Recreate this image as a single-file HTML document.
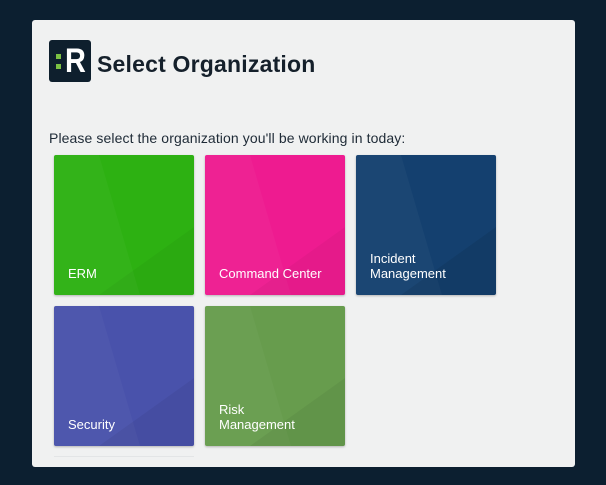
<!DOCTYPE html>
<html><head><style>
body{margin:0;width:606px;height:485px;background:#0c1f30;font-family:"Liberation Sans",sans-serif;overflow:hidden;position:relative}
.panel{position:absolute;left:32px;top:20px;width:543px;height:447px;background:#f0f1f1;border-radius:3px}
.logo{position:absolute;left:49px;top:40px;width:42px;height:42px;background:#0e1f2d;border-radius:3px}
h1{position:absolute;left:97px;top:51px;margin:0;font-size:23px;font-weight:bold;color:#15202b;letter-spacing:0.2px}
.sub{position:absolute;left:49px;top:130px;font-size:14px;color:#1e2a36;letter-spacing:0.1px}
.card{position:absolute;width:140px;height:140px;border-radius:2px;overflow:hidden;box-shadow:0 1px 2px rgba(0,0,0,.25)}
.card svg{position:absolute;left:0;top:0}
.card span{position:absolute;left:14px;bottom:14px;color:#fff;font-size:13px;line-height:15px}
</style></head><body>
<div class="panel"></div>
<div class="logo">
<div style="position:absolute;left:7px;top:14px;width:5px;height:5px;background:#7bc143"></div>
<div style="position:absolute;left:7px;top:24px;width:5px;height:5px;background:#7bc143"></div>
<div style="position:absolute;left:16px;top:2px;color:#fff;font-size:34px;font-weight:bold;line-height:38px;transform:scaleX(0.85);transform-origin:left">R</div>
</div>
<h1>Select Organization</h1>
<div class="sub">Please select the organization you'll be working in today:</div>

<div class="card" style="left:54px;top:155px;background:#2db112"><svg width="140" height="140"><polygon points="0,0 45,0 86,140 0,140" fill="rgba(255,255,255,0.03)"/><polygon points="140,72 140,140 45,140" fill="rgba(0,0,0,0.035)"/></svg><span>ERM</span></div>
<div class="card" style="left:205px;top:155px;background:#ee1b90"><svg width="140" height="140"><polygon points="0,0 45,0 86,140 0,140" fill="rgba(255,255,255,0.03)"/><polygon points="140,72 140,140 45,140" fill="rgba(0,0,0,0.035)"/></svg><span>Command Center</span></div>
<div class="card" style="left:356px;top:155px;background:#14406f"><svg width="140" height="140"><polygon points="0,0 45,0 86,140 0,140" fill="rgba(255,255,255,0.03)"/><polygon points="140,72 140,140 45,140" fill="rgba(0,0,0,0.08)"/></svg><span>Incident<br>Management</span></div>
<div class="card" style="left:54px;top:306px;background:#4952ab"><svg width="140" height="140"><polygon points="0,0 45,0 86,140 0,140" fill="rgba(255,255,255,0.03)"/><polygon points="140,72 140,140 45,140" fill="rgba(0,0,0,0.05)"/></svg><span>Security</span></div>
<div class="card" style="left:205px;top:306px;background:#679c4d"><svg width="140" height="140"><polygon points="0,0 45,0 86,140 0,140" fill="rgba(255,255,255,0.03)"/><polygon points="140,72 140,140 45,140" fill="rgba(0,0,0,0.05)"/></svg><span>Risk<br>Management</span></div>
<div style="position:absolute;left:54px;top:456px;width:140px;height:1px;background:#e3e5e6"></div>
</body></html>
